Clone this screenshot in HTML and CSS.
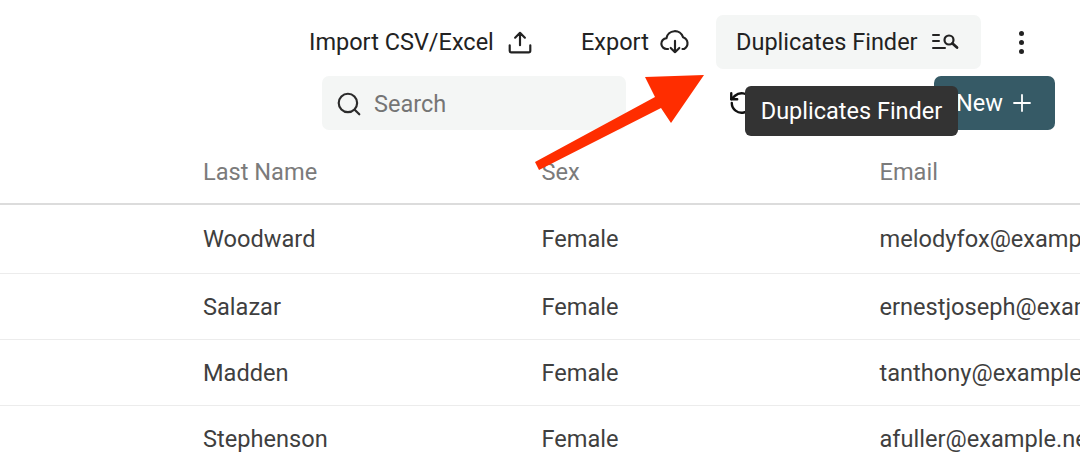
FILE: index.html
```html
<!DOCTYPE html>
<html lang="en">
<head>
<meta charset="utf-8">
<title>Contacts</title>
<link rel="stylesheet" href="styles.css">
</head>
<body>
<div class="page">
  <div class="toolbar toolbar-top">
    <button class="action action-import">Import CSV/Excel
      <svg class="icon" viewBox="0 0 24 24" width="26" height="26" fill="none" stroke="#222" stroke-width="2" stroke-linecap="round" stroke-linejoin="round"><path d="M12 15V3.500M7.500 8 12 3.500 16.500 8M2.500 15v5a1.500 1.500 0 0 0 1.500 1.500h16a1.500 1.500 0 0 0 1.500-1.500v-5"/></svg>
    </button>
    <button class="action action-export">Export
      <svg class="icon" viewBox="0 0 28 24" width="30" height="26" fill="none" stroke="#222" stroke-width="2" stroke-linecap="round" stroke-linejoin="round"><path d="M7.500 18.500H6.500a5 5 0 0 1-.5-10 8 8 0 0 1 15.500-1 6 6 0 0 1 1 11h-1.500"/><path d="M14 11v10.500M10 17.500l4 4 4-4"/></svg>
    </button>
    <button class="action action-finder">Duplicates Finder
      <svg class="icon" viewBox="0 0 27 18" width="27" height="18" fill="none" stroke="#222" stroke-width="2" stroke-linecap="round"><path d="M1 2h6M1 8h6M1 15h12"/><circle cx="17" cy="7" r="4.500" stroke-width="2.200"/><path d="m20.500 10.500 4.500 4" stroke-width="2.800"/></svg>
    </button>
    <button class="kebab" aria-label="More"><span></span><span></span><span></span></button>
  </div>
  <div class="toolbar toolbar-second">
    <div class="search">
      <svg viewBox="0 0 24 24" width="26" height="26" fill="none" stroke="#2b2b2b" stroke-width="2" stroke-linecap="round"><circle cx="11" cy="11" r="8.500"/><path d="m17.500 17.500 4 4"/></svg>
      <span>Search</span>
    </div>
    <svg class="history" viewBox="0 0 24 24" width="26" height="28" fill="none" stroke="#111" stroke-width="2.200" stroke-linecap="round" stroke-linejoin="round"><path d="M3.500 12a9 9 0 1 0 3-6.700L3 8.500"/><path d="M3 3v5.500h5.500"/></svg>
    <button class="new">New
      <svg viewBox="0 0 20 20" width="20" height="20" fill="none" stroke="#fff" stroke-width="1.800" stroke-linecap="round"><path d="M10 2v16M2 10h16"/></svg>
    </button>
  </div>
  <div class="table">
    <div class="row head"><span>Last Name</span><span>Sex</span><span>Email</span></div>
    <div class="row first"><span>Woodward</span><span>Female</span><span>melodyfox@example.com</span></div>
    <div class="row"><span>Salazar</span><span>Female</span><span>ernestjoseph@example.com</span></div>
    <div class="row"><span>Madden</span><span>Female</span><span>tanthony@example.com</span></div>
    <div class="row"><span>Stephenson</span><span>Female</span><span>afuller@example.net</span></div>
  </div>
  <div class="tooltip">Duplicates Finder</div>
  <svg class="arrow" viewBox="0 0 1080 467" width="1080" height="467"><path fill="#ff2d00" d="M535 162 655 97 645 77 704 75 671 123 661 108 539 170Z"/></svg>
</div>
</body>
</html>
```
FILE: styles.css
```css
* { box-sizing: border-box; }
html, body { margin: 0; padding: 0; background: #fff; overflow: hidden; }
body { font-family: Roboto, "Liberation Sans", sans-serif; color: #3f3f3f; }
.page { position: relative; width: 1080px; height: 467px; overflow: hidden; }
.toolbar { display: flex; align-items: center; }
button { font: inherit; border: 0; background: none; padding: 0; color: #222; display: flex; align-items: center; }
.toolbar-top { height: 54px; margin-top: 15px; padding-left: 309px; }
.action { font-size: 23.500px; height: 54px; }
.action-import { gap: 13px; width: 272px; }
.action-export { gap: 11px; width: 135px; }
.action-finder { width: 265px; padding-left: 20px; gap: 14px; background: #f4f6f5; border-radius: 7px; }
.kebab { width: 80px; flex-direction: column; justify-content: center; gap: 4px; height: 54px; }
.kebab span { width: 5px; height: 5px; border-radius: 50%; background: #222; }
.toolbar-second { height: 54px; margin-top: 7px; padding-left: 322px; }
.search { width: 304px; height: 54px; background: #f4f6f5; border-radius: 7px; display: flex; align-items: center; gap: 12px; padding: 2px 0 0 14px; font-size: 23.500px; color: #757575; }
.history { margin-left: 102px; }
.new { margin-left: 180px; width: 121px; height: 54px; background: #365a66; color: #fff; border-radius: 7px; font-size: 23.500px; padding-left: 22px; gap: 9px; }
.row { display: grid; grid-template-columns: 338.500px 338px 1fr; padding-left: 203px; height: 66px; align-items: center; font-size: 23.600px; white-space: nowrap; border-bottom: 1px solid #ececec; overflow: hidden; }
.head { height: 75px; color: #7b7b7b; border-bottom: 2px solid #dcdcdc; padding-top: 11px; }
.first { height: 69px; }
.tooltip { position: absolute; left: 745px; top: 86px; width: 213px; height: 50px; background: #333; color: #fff; border-radius: 6px; font-size: 23.500px; display: flex; align-items: center; justify-content: center; }
.arrow { position: absolute; left: 0; top: 0; pointer-events: none; }
```
